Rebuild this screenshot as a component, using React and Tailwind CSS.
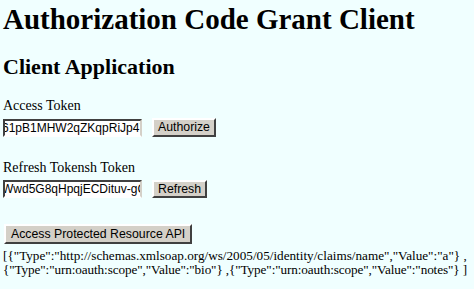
export default function App() {
  const btn =
    "bg-[#d4d0c8] border-2 border-t-white border-l-white border-r-[#404040] border-b-[#404040] text-[12.3px] leading-none text-black px-[4px] [font-family:'Liberation_Sans',Arial,sans-serif]"
  const input =
    "bg-white border-2 border-t-[#404040] border-l-[#404040] border-r-[#d4d0c8] border-b-white text-[12px] leading-none text-black w-[139px] h-[18px] overflow-hidden flex items-center whitespace-nowrap [font-family:'Liberation_Sans',Arial,sans-serif]"

  return (
    <div className="w-[474px] h-[289px] bg-[#f0ffff] text-black overflow-hidden [font-family:'Liberation_Serif','Times_New_Roman',serif]">
      <h1 className="text-[29px] font-bold leading-none pl-[3px] pt-[5px]">
        Authorization Code Grant Client
      </h1>
      <h2 className="text-[22px] font-bold leading-none pl-[3px] mt-[22px]">Client Application</h2>

      <div className="pl-[3px] mt-[21px]">
        <div className="text-[14px] leading-none">Access Token</div>
        <div className="flex items-center gap-[10px] mt-[5px]">
          <div className={input}>
            <span className="-ml-[3px]">61pB1MHW2qZKqpRiJp47</span>
          </div>
          <button className={btn + " h-[19px]"}>Authorize</button>
        </div>
      </div>

      <div className="pl-[3px] mt-[24px]">
        <div className="text-[14px] leading-none">Refresh Tokensh Token</div>
        <div className="flex items-center gap-[10px] mt-[5px]">
          <div className={input}>
            <span className="-ml-[3px]">Wwd5G8qHpqjECDituv-gC</span>
          </div>
          <button className={btn + " h-[18px]"}>Refresh</button>
        </div>
      </div>

      <div className="pl-[4px] mt-[23px]">
        <button className={btn + " h-[20px] px-[5px]"}>Access Protected Resource API</button>
      </div>
      <div className="pl-[3px] text-[13.2px] leading-[14px] mt-[4px] whitespace-nowrap">
        <div>
          [{'{'}"Type":"http://schemas.xmlsoap.org/ws/2005/05/identity/claims/name","Value":"a"{'}'} ,
        </div>
        <div className="tracking-[-0.1px]">
          {'{'}"Type":"urn:oauth:scope","Value":"bio"{'}'} ,{'{'}"Type":"urn:oauth:scope","Value":"notes"{'}'} ]
        </div>
      </div>
    </div>
  )
}
